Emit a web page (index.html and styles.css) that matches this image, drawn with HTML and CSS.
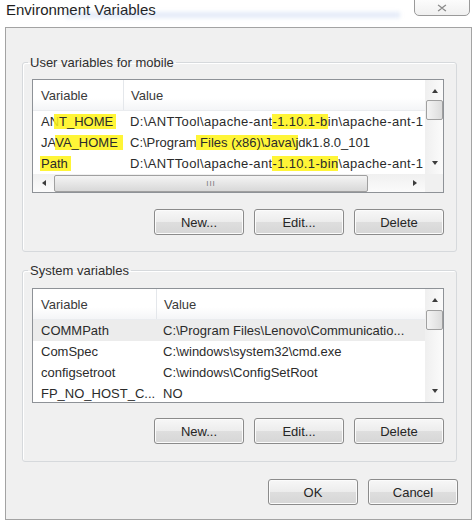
FILE: index.html
```html
<!DOCTYPE html>
<html lang="en">
    <head>
        <meta charset="UTF-8">
        <meta name="viewport" content="width=device-width, initial-scale=1.0">
        <title>Environment Variables</title>
        <link rel="stylesheet" href="styles.css">
    </head>
    <body>
        <div class="titlebar">
            <h1 class="title">Environment Variables</h1>
            <div class="ghost"></div>
            <button class="close" aria-label="Close">
                <svg width="10" height="8" viewBox="0 0 10 8">
                    <path d="M1 1 C3 2 7 6 9 7 M9 1 C7 2 3 6 1 7" fill="none" stroke="#8a8a8a" stroke-width="1.3"/>
                </svg>
            </button>
        </div>

        <div class="dialog">
            <fieldset class="group">
                <legend>User variables for mobile</legend>
                <div class="list with-hscroll">
                    <div class="list-main">
                        <div class="row head user-cols">
                            <span class="cell">Variable</span>
                            <span class="cell sep">Value</span>
                        </div>
                        <div class="rows rows-user">
                            <div class="row user-cols">
                                <span class="cell">AN<mark class="hl hl-a">T_HOME</mark></span>
                                <span class="cell wide">D:\ANTTool\apache-ant<mark class="hl">-1.10.1-b</mark>in\apache-ant-1</span>
                            </div>
                            <div class="row user-cols">
                                <span class="cell">JA<mark class="hl hl-j">VA_HOME</mark></span>
                                <span class="cell">C:\Program<mark class="hl"> Files (x86)\Java\j</mark>dk1.8.0_101</span>
                            </div>
                            <div class="row user-cols">
                                <span class="cell"><mark class="hl hl-p">Path</mark></span>
                                <span class="cell wide">D:\ANTTool\apache-ant<mark class="hl">-1.10.1-bin</mark>\apache-ant-1</span>
                            </div>
                        </div>
                    </div>
                    <div class="vscroll">
                        <span class="arrow up"></span>
                        <span class="vthumb thumb-user"></span>
                        <span class="arrow down"></span>
                    </div>
                    <div class="hscroll">
                        <span class="arrow left"></span>
                        <span class="hthumb"><span class="grip">III</span></span>
                        <span class="arrow right"></span>
                    </div>
                    <div class="corner"></div>
                </div>
                <div class="buttons">
                    <button class="btn">New...</button>
                    <button class="btn">Edit...</button>
                    <button class="btn">Delete</button>
                </div>
            </fieldset>

            <fieldset class="group group-system">
                <legend>System variables</legend>
                <div class="list">
                    <div class="list-main">
                        <div class="row head sys-cols">
                            <span class="cell">Variable</span>
                            <span class="cell sep">Value</span>
                        </div>
                        <div class="rows rows-sys">
                            <div class="row sys-cols selected">
                                <span class="cell">COMMPath</span>
                                <span class="cell">C:\Program Files\Lenovo\Communicatio...</span>
                            </div>
                            <div class="row sys-cols">
                                <span class="cell">ComSpec</span>
                                <span class="cell">C:\windows\system32\cmd.exe</span>
                            </div>
                            <div class="row sys-cols">
                                <span class="cell">configsetroot</span>
                                <span class="cell">C:\windows\ConfigSetRoot</span>
                            </div>
                            <div class="row sys-cols">
                                <span class="cell">FP_NO_HOST_C...</span>
                                <span class="cell">NO</span>
                            </div>
                        </div>
                    </div>
                    <div class="vscroll">
                        <span class="arrow up"></span>
                        <span class="vthumb thumb-sys"></span>
                        <span class="arrow down"></span>
                    </div>
                </div>
                <div class="buttons">
                    <button class="btn">New...</button>
                    <button class="btn">Edit...</button>
                    <button class="btn">Delete</button>
                </div>
            </fieldset>

            <div class="buttons footer">
                <button class="btn">OK</button>
                <button class="btn">Cancel</button>
            </div>
        </div>
    </body>
</html>
```

FILE: styles.css
```css
body {
    margin: 0;
    width: 474px;
    height: 523px;
    overflow: hidden;
    background: #ffffff;
    font-family: "Liberation Sans", Arial, sans-serif;
    color: #2b2b2b;
}

/* window caption */
.titlebar {
    display: flex;
    height: 27px;
    padding-left: 6px;
}

.title {
    margin: 1px 0 0 0;
    font-size: 15px;
    font-weight: normal;
    line-height: 18px;
    color: #1e1e1e;
}

.ghost {
    flex: 1;
    height: 6px;
    margin: 12px 14px 0 -90px;
    background: rgba(90, 130, 210, 0.16);
    filter: blur(2px);
}

.close {
    width: 56px;
    height: 21px;
    margin: -5px 4px 0 0;
    padding: 4px 0 0 0;
    border: 1px solid #9a9a9a;
    border-radius: 0 0 5px 5px;
    background: linear-gradient(#ffffff, #f0f0f0);
}

/* dialog body */
.dialog {
    margin-left: 5px;
    width: 465px;
    height: 491px;
    padding: 0;
    border: 1px solid #a3a3a3;
    background: #f0f0f0;
}

.group {
    margin: 27px 14px 0 16px;
    padding: 9px 12px 16px 9px;
    border: 1px solid #d6d9dc;
    border-radius: 3px;
    box-shadow: inset 1px 1px 0 #ffffff;
}

.group-system {
    margin-top: 11px;
    padding-top: 10px;
    padding-bottom: 17px;
}

.group legend {
    margin-left: -4px;
    padding: 0 2px;
    font-size: 13px;
    line-height: 15px;
    color: #2e2e2e;
}

/* list view */
.list {
    display: grid;
    grid-template-columns: 1fr 18px;
    border: 1px solid #8e9297;
    background: #ffffff;
}

.with-hscroll {
    grid-template-rows: 94px 18px;
}

.list-main {
    overflow: hidden;
}

.row {
    display: grid;
    height: 21px;
    align-items: center;
    font-size: 13px;
    white-space: nowrap;
}

.user-cols {
    grid-template-columns: 90px 1fr;
}

.sys-cols {
    grid-template-columns: 123px 1fr;
}

.cell {
    padding-left: 8px;
    overflow: hidden;
}

.cell + .cell {
    padding-left: 7px;
}

.wide {
    letter-spacing: 0.35px;
}

.head {
    height: 31px;
    background: linear-gradient(#ffffff 60%, #f4f5f7);
    border-bottom: 1px solid #eaecef;
    box-sizing: border-box;
    color: #3a3a3a;
}

.head .sep {
    height: 100%;
    display: flex;
    align-items: center;
    border-left: 1px solid #e4e7eb;
}

.rows-user {
    height: 63px;
    overflow: hidden;
}

.rows-sys {
    height: 82px;
    overflow: hidden;
}

.selected {
    background: #ececec;
}

.hl {
    background: rgba(255, 243, 20, 0.85);
    color: inherit;
    padding: 3px 0;
}

.hl-a {
    padding: 3px 3px 2px 5px;
    margin: 0 -3px 0 -5px;
}

.hl-j {
    padding: 1px 6px 2px 0;
    margin-right: -6px;
}

.hl-p {
    padding: 4px 3px 4px 1px;
    margin-left: -1px;
}

/* scroll bars */
.vscroll {
    display: flex;
    flex-direction: column;
    align-items: center;
    background: linear-gradient(90deg, #f0f0f0, #fbfbfb);
    border-left: 1px solid #f0f0f0;
}

.hscroll {
    display: flex;
    align-items: center;
    background: linear-gradient(#f0f0f0, #fbfbfb);
}

.corner {
    background: #f0f0f0;
}

.arrow {
    width: 0;
    height: 0;
    border: 3px solid transparent;
}

.up {
    margin-top: 9px;
    border-bottom: 4px solid #3c3c3c;
    border-top-width: 0;
}

.down {
    margin-top: auto;
    margin-bottom: 9px;
    border-top: 4px solid #3c3c3c;
    border-bottom-width: 0;
}

.left {
    margin-left: 9px;
    border-right: 4px solid #3c3c3c;
    border-left-width: 0;
}

.right {
    margin-left: auto;
    margin-right: 8px;
    border-left: 4px solid #3c3c3c;
    border-right-width: 0;
}

.vthumb {
    width: 15px;
    height: 18px;
    border: 1px solid #a0a0a0;
    border-radius: 2px;
    background: linear-gradient(90deg, #f4f4f4, #dcdcdc);
}

.thumb-user {
    margin-top: 7px;
}

.thumb-sys {
    margin-top: 8px;
}

.hthumb {
    display: flex;
    align-items: center;
    justify-content: center;
    width: 312px;
    height: 15px;
    margin-left: 8px;
    border: 1px solid #a0a0a0;
    border-radius: 2px;
    background: linear-gradient(#f4f4f4, #d8d8d8);
}

.grip {
    font-size: 8px;
    letter-spacing: 1px;
    color: #7a7a7a;
}

/* push buttons */
.buttons {
    display: flex;
    justify-content: flex-end;
    gap: 10px;
    margin-top: 16px;
}

.group-system .buttons {
    margin-top: 15px;
}

.footer {
    margin: 17px 13px 0 0;
}

.btn {
    width: 90px;
    height: 26px;
    padding: 0;
    border: 1px solid #8b8b8b;
    border-radius: 3px;
    background: linear-gradient(#f7f7f7, #ececec 50%, #dedede 51%, #d6d6d6);
    box-shadow: inset 0 0 0 1px #fbfbfb;
    font-family: "Liberation Sans", Arial, sans-serif;
    font-size: 13px;
    color: #262626;
}
```
